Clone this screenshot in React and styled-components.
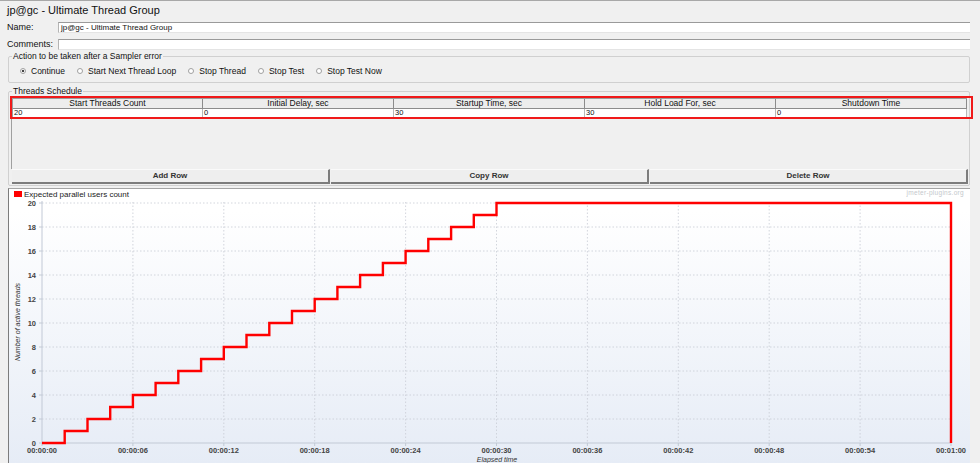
import React from 'react';
import styled, { createGlobalStyle } from 'styled-components';

const GlobalStyle = createGlobalStyle`
  body {
    margin: 0;
    background: #f0f0f0;
  }
`;

const columns = ['Start Threads Count', 'Initial Delay, sec', 'Startup Time, sec', 'Hold Load For, sec', 'Shutdown Time'];
const row = ['20', '0', '30', '30', '0'];
const actions = ['Continue', 'Start Next Thread Loop', 'Stop Thread', 'Stop Test', 'Stop Test Now'];

// chart geometry, page coordinates
const X0 = 42;
const X1 = 951;
const Y0 = 443;
const UNIT = 12;
const xAt = (t) => X0 + (t * (X1 - X0)) / 60;
const yAt = (v) => Y0 - v * UNIT;

function stepPath() {
  let d = `M${X0},${Y0}`;
  for (let k = 1; k <= 20; k++) {
    d += ` H${xAt(k * 1.5).toFixed(1)} V${yAt(k)}`;
  }
  d += ` H${xAt(60).toFixed(1)} V${Y0}`;
  return d;
}

function fmt(t) {
  const m = Math.floor(t / 60);
  const s = t % 60;
  return `00:${String(m).padStart(2, '0')}:${String(s).padStart(2, '0')}`;
}

export default function App() {
  const xTicks = Array.from({ length: 11 }, (_, i) => i * 6);
  const yTicks = Array.from({ length: 11 }, (_, i) => i * 2);
  return (
    <Page>
      <GlobalStyle />
      <Title>jp@gc - Ultimate Thread Group</Title>
      <FieldRow $gap={1}>
        <Label>Name:</Label>
        <TextBox>jp@gc - Ultimate Thread Group</TextBox>
      </FieldRow>
      <FieldRow $gap={5}>
        <Label>Comments:</Label>
        <TextBox />
      </FieldRow>

      <Group $top={1}>
        <Legend>Action to be taken after a Sampler error</Legend>
        <RadioRow>
          {actions.map((a, i) => (
            <RadioItem key={a}>
              <Radio $checked={i === 0} />
              {a}
            </RadioItem>
          ))}
        </RadioRow>
      </Group>

      <Group $top={3}>
        <Legend>Threads Schedule</Legend>
        <Highlight>
          <Table>
            {columns.map((c) => (
              <HeadCell key={c}>{c}</HeadCell>
            ))}
            {row.map((v, i) => (
              <Cell key={i}>{v}</Cell>
            ))}
          </Table>
        </Highlight>
        <Viewport />
        <ButtonRow>
          <Button>Add Row</Button>
          <Button>Copy Row</Button>
          <Button>Delete Row</Button>
        </ButtonRow>
      </Group>

      <ChartPanel>
        <svg width="961" height="280" viewBox="9 189 961 280">
          <rect x="14" y="191" width="8" height="6" fill="#ff0000" />
          <text x="24" y="197" fontSize="8" fill="#222" fontFamily="Liberation Sans, Arial, sans-serif">
            Expected parallel users count
          </text>
          <text x="964" y="195" fontSize="6.5" fill="#c4c8cc" textAnchor="end" letterSpacing="0.3" fontFamily="Liberation Sans, Arial, sans-serif">
            jmeter-plugins.org
          </text>

          {yTicks.map((v) => (
            <g key={v}>
              {v > 0 && (
                <line x1={X0} x2={X1} y1={yAt(v)} y2={yAt(v)} stroke="#c8ccd4" strokeWidth="0.8" strokeDasharray="1.5 2" />
              )}
              <line x1={X0 - 3} x2={X0} y1={yAt(v)} y2={yAt(v)} stroke="#b8c0cc" strokeWidth="0.8" />
              <text x={X0 - 6} y={yAt(v) + 2.5} fontSize="7.5" fill="#444" textAnchor="end" fontWeight="bold" fontFamily="Liberation Sans, Arial, sans-serif">
                {v}
              </text>
            </g>
          ))}
          {xTicks.map((t) => (
            <g key={t}>
              {t > 0 && (
                <line x1={xAt(t)} x2={xAt(t)} y1={yAt(20) - 1} y2={Y0} stroke="#c8ccd4" strokeWidth="0.8" strokeDasharray="1.5 2" />
              )}
              <line x1={xAt(t)} x2={xAt(t)} y1={Y0} y2={Y0 + 3} stroke="#b8c0cc" strokeWidth="0.8" />
              <text x={xAt(t)} y={Y0 + 10} fontSize="7.5" fill="#444" textAnchor="middle" fontWeight="bold" fontFamily="Liberation Sans, Arial, sans-serif">
                {fmt(t)}
              </text>
            </g>
          ))}
          <line x1={X0} x2={X0} y1={yAt(20) - 2} y2={Y0} stroke="#c2c9d6" strokeWidth="1" />
          <line x1={X0} x2={X1} y1={Y0} y2={Y0} stroke="#c2c9d6" strokeWidth="1.2" />

          <text x="497" y="461.5" fontSize="7" fill="#333" fontStyle="italic" textAnchor="middle" fontFamily="Liberation Sans, Arial, sans-serif">
            Elapsed time
          </text>
          <text
            transform="translate(20 322) rotate(-90)"
            fontSize="7"
            fill="#333"
            fontStyle="italic"
            textAnchor="middle"
            fontFamily="Liberation Sans, Arial, sans-serif"
          >
            Number of active threads
          </text>

          <path d={stepPath()} fill="none" stroke="#ff0000" strokeWidth="2.4" />
        </svg>
      </ChartPanel>
    </Page>
  );
}

const Page = styled.div`
  width: 980px;
  height: 463px;
  overflow: hidden;
  box-sizing: border-box;
  display: flex;
  flex-direction: column;
  background: #f0f0f0;
  border-top: 1px solid #a8a8a8;
  font-family: "Liberation Sans", Arial, sans-serif;
  color: #111;
`;

const Title = styled.div`
  height: 19px;
  line-height: 19px;
  padding-left: 7px;
  font-size: 11px;
  color: #111;
`;

const FieldRow = styled.div`
  display: flex;
  align-items: center;
  height: 12px;
  margin-top: ${(p) => p.$gap}px;
  padding: 0 10px 0 7px;
`;

const Label = styled.div`
  width: 51px;
  font-size: 9px;
`;

const TextBox = styled.div`
  flex: 1;
  height: 11px;
  box-sizing: border-box;
  background: #fff;
  border-top: 1px solid #9a9a9a;
  border-left: 1px solid #b4b4b4;
  border-bottom: 1px solid #e4e4e4;
  padding-left: 2px;
  font-size: 8px;
  line-height: 10px;
`;

const Group = styled.fieldset`
  margin: ${(p) => p.$top}px 10px 0 8px;
  padding: 0;
  min-width: 0;
  border: 1px solid #d0d0d0;
  border-radius: 2px;
`;

const Legend = styled.legend`
  margin-left: 3px;
  padding: 0 1px;
  font-size: 8.5px;
  line-height: 10px;
`;

const RadioRow = styled.div`
  display: flex;
  align-items: center;
  gap: 12px;
  height: 10px;
  padding: 5px 0 6px 11px;
`;

const RadioItem = styled.div`
  display: flex;
  align-items: center;
  gap: 5px;
  font-size: 8.5px;
`;

const Radio = styled.span`
  width: 6px;
  height: 6px;
  box-sizing: border-box;
  border-radius: 50%;
  border: 1px solid #a0a0a0;
  background: ${(p) => (p.$checked ? 'radial-gradient(circle, #444 0 1.3px, #fff 1.6px)' : '#fff')};
`;

const Highlight = styled.div`
  margin: 0 -4px 0 1px;
  padding: 0 4px 0 0;
  border: 2px solid #f01a1a;
`;

const Table = styled.div`
  display: grid;
  grid-template-columns: repeat(5, 1fr);
  border-top: 1px solid #9c9c9c;
`;

const HeadCell = styled.div`
  height: 9px;
  line-height: 9px;
  text-align: center;
  font-size: 8.5px;
  background: #ededed;
  border-right: 1px solid #8c8c8c;
  border-bottom: 1px solid #8c8c8c;
  &:first-child {
    border-left: 1px solid #9c9c9c;
  }
`;

const Cell = styled.div`
  height: 8px;
  line-height: 8px;
  padding-left: 1px;
  font-size: 7.5px;
  background: #fff;
  border-right: 1px solid #b8b8b8;
  &:nth-child(6) {
    border-left: 1px solid #9c9c9c;
  }
`;

const Viewport = styled.div`
  height: 50px;
  margin-left: 2px;
  border-left: 1px solid #a0a0a0;
`;

const ButtonRow = styled.div`
  display: grid;
  grid-template-columns: repeat(3, 1fr);
  gap: 1px;
  margin: 0 1px 1px 3px;
`;

const Button = styled.div`
  height: 12px;
  line-height: 12px;
  text-align: center;
  font-size: 8px;
  font-weight: bold;
  color: #333;
  background: #eeeeee;
  border-top: 1px solid #fafafa;
  border-bottom: 2px solid #7c7c7c;
  border-right: 2px solid #7c7c7c;
`;

const ChartPanel = styled.div`
  flex: 1;
  margin: 2px 10px 0 8px;
  border-top: 1px solid #a4a4a4;
  border-left: 1px solid #7c7c7c;
  overflow: hidden;
  background: linear-gradient(#ffffff 0%, #ffffff 8%, #e6ecf6 100%);
  svg {
    display: block;
  }
`;
